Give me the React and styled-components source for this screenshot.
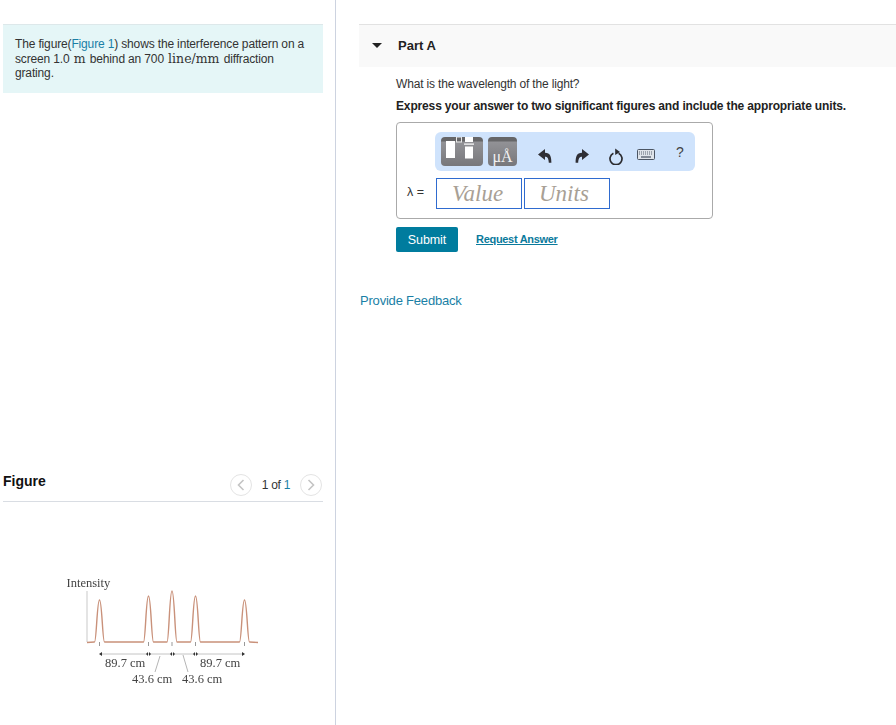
import React from "react";
import styled, { createGlobalStyle } from "styled-components";

const GlobalStyle = createGlobalStyle`
  html, body { margin: 0; padding: 0; background: #fff; }
  body { font-family: "Liberation Sans", Arial, sans-serif; color: #333; }
  #root { min-height: 725px; }
`;

const Page = styled.div`
  display: flex;
  width: 896px;
  height: 725px;
  overflow: hidden;
`;

const LeftColumn = styled.div`
  width: 336px;
  height: 725px;
  flex: none;
  box-sizing: border-box;
  padding: 24px 12px 0 3px;
  border-right: 1px solid #cdd3e0;
`;

const Intro = styled.div`
  height: 69px;
  box-sizing: border-box;
  padding: 12px 17px 0 12px;
  background: #e5f6f7;
  border-top: 1px solid #dde8ea;
  font-size: 12px;
  letter-spacing: -0.15px;
  line-height: 14.5px;
  color: #333;
`;

const Link = styled.a`
  color: #1a7fa6;
`;

const MathText = styled.span`
  font-family: "DejaVu Serif", "Liberation Serif", serif;
  font-size: 12.5px;
  line-height: 1;
  letter-spacing: 0;
  margin: 0 1px;
`;

const FigureHeader = styled.div`
  display: flex;
  align-items: center;
  justify-content: space-between;
  height: 31px;
  margin-top: 378px;
  box-sizing: border-box;
  padding-bottom: 6px;
  border-bottom: 1px solid #d9dde3;
`;

const FigureTitle = styled.div`
  margin-top: -4px;
  font-size: 14px;
  font-weight: 700;
  color: #111;
`;

const Pager = styled.div`
  display: flex;
  align-items: center;
  gap: 10px;
  margin-top: 3px;
  margin-right: 1px;
  font-size: 12px;
  letter-spacing: -0.3px;
  color: #333;
`;

const PagerButton = styled.div`
  width: 22px;
  height: 22px;
  box-sizing: border-box;
  display: flex;
  align-items: center;
  justify-content: center;
  border: 1px solid #e4e4e4;
  border-radius: 50%;
`;

const ChartWrap = styled.div`
  margin: 63px 0 0 47px;
  filter: blur(0.35px);
`;

const RightColumn = styled.div`
  flex: 1;
  padding-top: 24px;
  padding-left: 23px;
`;

const PartHeader = styled.div`
  display: flex;
  align-items: center;
  height: 43px;
  box-sizing: border-box;
  padding: 0 0 2px 13px;
  gap: 16px;
  background: #f9f9f9;
  border-top: 1px solid #e2e2e2;
  font-size: 13px;
  font-weight: 700;
  color: #222;
`;

const Caret = styled.div`
  width: 0;
  height: 0;
  border-left: 5px solid transparent;
  border-right: 5px solid transparent;
  border-top: 5px solid #222;
`;

const PartBody = styled.div`
  padding: 10px 0 0 37px;
`;

const Question = styled.div`
  font-size: 12px;
  letter-spacing: -0.17px;
  line-height: 14px;
  color: #333;
`;

const Instruction = styled.div`
  margin-top: 8px;
  font-size: 12px;
  letter-spacing: -0.15px;
  line-height: 14px;
  font-weight: 700;
  color: #222;
`;

const AnswerBox = styled.div`
  width: 317px;
  height: 97px;
  margin-top: 9px;
  box-sizing: border-box;
  padding: 9px 17px 0 38px;
  border: 1px solid #aaa;
  border-radius: 4px;
`;

const Toolbar = styled.div`
  display: flex;
  align-items: center;
  width: 260px;
  height: 39px;
  box-sizing: border-box;
  padding-left: 6px;
  background: #cfe3fc;
  border-radius: 6px;
`;

const TemplateButton = styled.div`
  position: relative;
  width: ${(p) => p.$w}px;
  height: 29px;
  margin-right: 5px;
  overflow: hidden;
  background: linear-gradient(#666668 0, #666668 4px, #929296 5px, #77777b 100%);
  border-radius: 4px;
  display: flex;
  justify-content: center;
`;

const UnitGlyph = styled.span`
  font-family: "Liberation Serif", serif;
  font-size: 16px;
  line-height: 16px;
  margin-top: 12px;
  color: #f2f2f2;
`;

const ToolIcon = styled.div`
  display: flex;
  margin-top: ${(p) => p.$top}px;
  margin-left: ${(p) => p.$gap}px;
`;

const HelpMark = styled.span`
  margin-left: 21px;
  font-size: 14px;
  color: #444;
`;

const InputRow = styled.div`
  display: flex;
  align-items: center;
  margin: 7px 0 0 -28px;
`;

const Lambda = styled.div`
  width: 29px;
  font-size: 12.5px;
  margin-top: -3px;
  color: #333;
`;

const ValueInput = styled.div`
  width: 86px;
  height: 31px;
  box-sizing: border-box;
  margin-right: 2px;
  padding-left: ${(p) => p.$pad}px;
  border: 1px solid #2f6bcf;
  font-family: "Liberation Serif", serif;
  font-size: 23px;
  font-style: italic;
  line-height: 30px;
  color: #a8a095;
`;

const Actions = styled.div`
  display: flex;
  align-items: center;
  margin-top: 8px;
  gap: 18px;
`;

const SubmitButton = styled.button`
  width: 62px;
  height: 25px;
  padding: 0;
  border: 0;
  border-radius: 2px;
  background: #007c9e;
  color: #fff;
  font-family: inherit;
  font-size: 12.5px;
  letter-spacing: -0.1px;
`;

const RequestLink = styled.a`
  margin-bottom: 2px;
  font-size: 11px;
  font-weight: 700;
  letter-spacing: -0.3px;
  color: #0a7a9c;
  text-decoration: underline;
`;

const Feedback = styled.a`
  display: block;
  margin: 41px 0 0 1px;
  font-size: 13px;
  letter-spacing: -0.2px;
  line-height: 16px;
  color: #1a7fa6;
`;

const peak = (x, top) =>
  `L${x - 5} 642 C${x - 3} 642 ${x - 2.5} ${top} ${x} ${top} C${x + 2.5} ${top} ${x + 3} 642 ${x + 5} 642`;

const peaks = [
  [99.5, 600],
  [148.5, 596],
  [172, 591],
  [195.5, 596],
  [244.5, 600],
];

function Chart() {
  const d = `M87 642.5 ${peaks.map(([x, t]) => peak(x, t)).join(" ")} L258 642.5`;
  return (
    <svg width="220" height="130" viewBox="50 565 220 130" style={{ display: "block" }}>
      <g fontFamily="'Liberation Serif', serif" fontSize="12.5" fill="#444">
        <text x="66.5" y="587">Intensity</text>
        <text x="105" y="667">89.7 cm</text>
        <text x="200" y="667">89.7 cm</text>
        <text x="132" y="683">43.6 cm</text>
        <text x="182" y="683">43.6 cm</text>
      </g>
      <line x1="87" y1="591" x2="87" y2="642" stroke="#c9c9c9" />
      <path d={d} fill="none" stroke="#c9917a" strokeWidth="1.4" />
      <line x1="100" y1="654" x2="244" y2="654" stroke="#c4c4c4" />
      <g stroke="#999" strokeWidth="1">
        {peaks.map(([x]) => (
          <line key={x} x1={x} y1="642" x2={x} y2="646" />
        ))}
      </g>
      <g fill="#333">
        <path d="M99 654l3-2v4z" />
        <path d="M245 654l-3-2v4z" />
        <path d="M146 654l2-2v4zM151 654l-2-2v4z" />
        <path d="M170 654l2-2v4zM175 654l-2-2v4z" />
        <path d="M193 654l2-2v4zM198 654l-2-2v4z" />
      </g>
      <path d="M160 656L155 672M183 655L188 672" stroke="#b5b5b5" fill="none" />
    </svg>
  );
}

function PagerArrow({ next }) {
  return (
    <svg width="8" height="12" viewBox="0 0 8 12">
      <path
        d={next ? "M1.5 1L6.5 6L1.5 11" : "M6.5 1L1.5 6L6.5 11"}
        fill="none"
        stroke="#c4c4c4"
        strokeWidth="1.6"
      />
    </svg>
  );
}

function FractionGlyph() {
  return (
    <svg width="42" height="29" viewBox="0 0 42 29">
      <rect x="5" y="4" width="9" height="17" fill="#fff" />
      <rect x="15.5" y="0" width="5" height="5" fill="none" stroke="#e8e8e8" />
      <rect x="24" y="0" width="8" height="5" fill="#fff" />
      <rect x="23" y="6.5" width="10" height="1.2" fill="#fff" />
      <rect x="24" y="9.5" width="8" height="12" fill="#fff" />
    </svg>
  );
}

function Reply({ flip }) {
  return (
    <svg width="14" height="14" viewBox="0 0 14 14">
      <path
        transform={flip ? "translate(14 0) scale(-1 1)" : undefined}
        d="M7 0L0 5.5L7 11V7.8C9.5 7.8 10.6 9.4 10.8 13.8H13.4C13.4 7.8 12.4 3.8 7 3.8Z"
        fill="#2f2f35"
      />
    </svg>
  );
}

function Reset() {
  return (
    <svg width="16" height="17" viewBox="0 0 16 17">
      <path d="M5.4 5.3A6 6 0 1 0 10.6 5.3" fill="none" stroke="#2b2b2f" strokeWidth="1.7" />
      <path d="M7.2 0.5L12 4L7.2 7Z" fill="#2b2b2f" />
    </svg>
  );
}

function KeyboardIcon() {
  return (
    <svg width="18" height="11" viewBox="0 0 18 11">
      <rect x="0.5" y="0.5" width="17" height="10" rx="1" fill="#dfe4ea" stroke="#4b5563" />
      <path d="M2 3h14M2 5h14" stroke="#5b6472" strokeWidth="1" strokeDasharray="1 1" />
      <path d="M4 8h10" stroke="#5b6472" strokeWidth="1.4" />
    </svg>
  );
}

export default function App() {
  return (
    <Page>
      <GlobalStyle />
      <LeftColumn>
        <Intro>
          The figure(<Link>Figure 1</Link>) shows the interference pattern on a screen 1.0{" "}
          <MathText>m</MathText> behind an 700 <MathText>line/mm</MathText> diffraction grating.
        </Intro>
        <FigureHeader>
          <FigureTitle>Figure</FigureTitle>
          <Pager>
            <PagerButton>
              <PagerArrow />
            </PagerButton>
            <span>
              1 of <Link>1</Link>
            </span>
            <PagerButton>
              <PagerArrow next />
            </PagerButton>
          </Pager>
        </FigureHeader>
        <ChartWrap>
          <Chart />
        </ChartWrap>
      </LeftColumn>
      <RightColumn>
        <PartHeader>
          <Caret />
          <span>Part A</span>
        </PartHeader>
        <PartBody>
          <Question>What is the wavelength of the light?</Question>
          <Instruction>Express your answer to two significant figures and include the appropriate units.</Instruction>
          <AnswerBox>
            <Toolbar>
              <TemplateButton $w={42}>
                <FractionGlyph />
              </TemplateButton>
              <TemplateButton $w={29}>
                <UnitGlyph>μÅ</UnitGlyph>
              </TemplateButton>
              <ToolIcon $gap={16} $top={9}>
                <Reply />
              </ToolIcon>
              <ToolIcon $gap={23} $top={9}>
                <Reply flip />
              </ToolIcon>
              <ToolIcon $gap={19} $top={10}>
                <Reset />
              </ToolIcon>
              <ToolIcon $gap={13} $top={6}>
                <KeyboardIcon />
              </ToolIcon>
              <HelpMark>?</HelpMark>
            </Toolbar>
            <InputRow>
              <Lambda>λ =</Lambda>
              <ValueInput $pad={15}>Value</ValueInput>
              <ValueInput $pad={14}>Units</ValueInput>
            </InputRow>
          </AnswerBox>
          <Actions>
            <SubmitButton>Submit</SubmitButton>
            <RequestLink>Request Answer</RequestLink>
          </Actions>
        </PartBody>
        <Feedback>Provide Feedback</Feedback>
      </RightColumn>
    </Page>
  );
}
